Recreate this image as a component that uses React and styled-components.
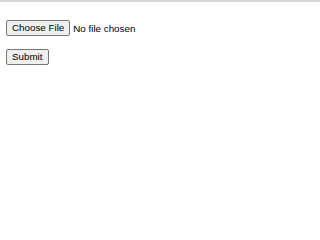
import React from 'react';
import styled, { createGlobalStyle } from 'styled-components';

const GlobalStyle = createGlobalStyle`
  html, body {
    margin: 0;
    padding: 0;
    background: #fff;
    font-family: Arial, "Liberation Sans", sans-serif;
  }
`;

const Page = styled.div`
  border-top: 2px solid #d6d6d6;
  padding: 18px 6px 0;
`;

const UploadForm = styled.form`
  display: flex;
  flex-direction: column;
  align-items: flex-start;
  gap: 13px;
`;

const FileRow = styled.div`
  display: flex;
  align-items: center;
  gap: 3px;
  font-size: 9.8px;
  color: #000;
`;

const Button = styled.button`
  font-family: Arial, "Liberation Sans", sans-serif;
  font-size: 9.8px;
  line-height: 12px;
  padding: 1px 5px;
  background: #efefef;
  color: #000;
  border: 1px solid #767676;
  border-radius: 2px;
`;

const HiddenFile = styled.input`
  display: none;
`;

export default function App() {
  const inputRef = React.useRef(null);
  const [fileName, setFileName] = React.useState('');

  return (
    <>
      <GlobalStyle />
      <Page>
        <UploadForm onSubmit={e => e.preventDefault()}>
          <FileRow>
            <Button type="button" onClick={() => inputRef.current && inputRef.current.click()}>
              Choose File
            </Button>
            <span>{fileName || 'No file chosen'}</span>
            <HiddenFile
              ref={inputRef}
              type="file"
              onChange={e => setFileName(e.target.files[0] ? e.target.files[0].name : '')}
            />
          </FileRow>
          <Button type="submit">Submit</Button>
        </UploadForm>
      </Page>
    </>
  );
}
